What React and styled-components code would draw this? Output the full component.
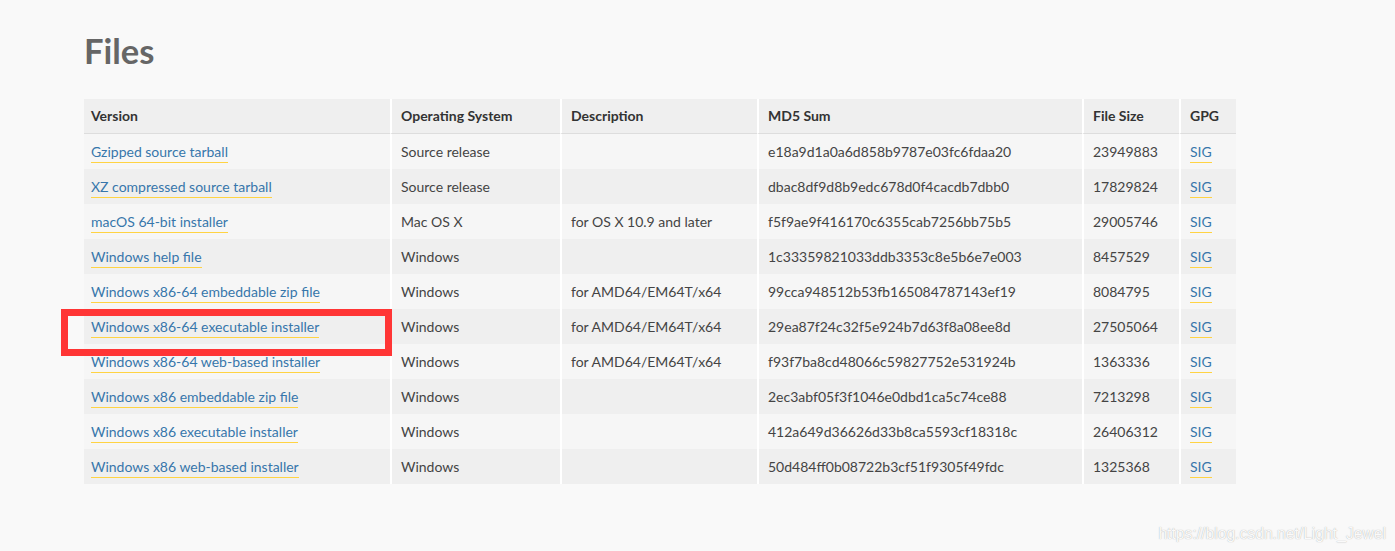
import React from "react";
import styled, { createGlobalStyle } from "styled-components";

const Global = createGlobalStyle`
  html, body { margin: 0; padding: 0; background: #f9f9f9; }
  body { font-family: Lato, "Noto Sans", sans-serif; color: #444; }
`;

const Page = styled.div`
  position: relative;
  width: 1395px;
  height: 551px;
  box-sizing: border-box;
  padding: 28px 0 0 84px;
  background: #f9f9f9;
  overflow: hidden;
`;

const Title = styled.h1`
  margin: 0 0 26px 0;
  font-family: Lato, sans-serif;
  font-size: 34.5px;
  line-height: 45px;
  font-weight: 700;
  color: #666;
`;

const Table = styled.table`
  border-collapse: separate;
  border-spacing: 0;
  table-layout: fixed;
  width: 1152px;
  font-family: Lato, sans-serif;
  font-size: 14px;
`;

const Th = styled.th`
  width: ${(p) => p.$w}px;
  height: 35px;
  box-sizing: border-box;
  padding: 0 6px 1px ${(p) => (p.$first ? 7 : 9)}px;
  text-align: left;
  font-weight: 700;
  color: #333;
  background: #efefef;
  border-left: ${(p) => (p.$first ? "0" : "2px solid #fff")};
  border-bottom: 1px solid #dddddd;
`;

const Row = styled.tr`
  background: ${(p) => (p.$odd ? "#f6f6f6" : "#efefef")};
`;

const Td = styled.td`
  height: 35px;
  box-sizing: border-box;
  padding: 0 6px 0 ${(p) => (p.$first ? 7 : 9)}px;
  color: #444;
  white-space: nowrap;
  border-left: ${(p) => (p.$first ? "0" : "2px solid #fff")};
`;

const Link = styled.a`
  color: #3776ab;
  text-decoration: none;
  border-bottom: 1px solid #ffd343;
  padding-bottom: 2px;
`;

const Highlight = styled.div`
  position: absolute;
  left: 61px;
  top: 309px;
  width: 331px;
  height: 47px;
  box-sizing: border-box;
  border: 7px solid #ff3535;
  pointer-events: none;
`;

const Watermark = styled.div`
  position: absolute;
  right: 9px;
  bottom: 8px;
  font-family: "Liberation Sans", Arial, sans-serif;
  font-size: 15.7px;
  color: rgba(255, 255, 255, 0.95);
  text-shadow: 0 0 1px rgba(90, 90, 90, 0.55);
`;

const cols = [
  ["Version", 306],
  ["Operating System", 170],
  ["Description", 197],
  ["MD5 Sum", 325],
  ["File Size", 97],
  ["GPG", 57],
];

const rows = [
  ["Gzipped source tarball", "Source release", "", "e18a9d1a0a6d858b9787e03fc6fdaa20", "23949883"],
  ["XZ compressed source tarball", "Source release", "", "dbac8df9d8b9edc678d0f4cacdb7dbb0", "17829824"],
  ["macOS 64-bit installer", "Mac OS X", "for OS X 10.9 and later", "f5f9ae9f416170c6355cab7256bb75b5", "29005746"],
  ["Windows help file", "Windows", "", "1c33359821033ddb3353c8e5b6e7e003", "8457529"],
  ["Windows x86-64 embeddable zip file", "Windows", "for AMD64/EM64T/x64", "99cca948512b53fb165084787143ef19", "8084795"],
  ["Windows x86-64 executable installer", "Windows", "for AMD64/EM64T/x64", "29ea87f24c32f5e924b7d63f8a08ee8d", "27505064"],
  ["Windows x86-64 web-based installer", "Windows", "for AMD64/EM64T/x64", "f93f7ba8cd48066c59827752e531924b", "1363336"],
  ["Windows x86 embeddable zip file", "Windows", "", "2ec3abf05f3f1046e0dbd1ca5c74ce88", "7213298"],
  ["Windows x86 executable installer", "Windows", "", "412a649d36626d33b8ca5593cf18318c", "26406312"],
  ["Windows x86 web-based installer", "Windows", "", "50d484ff0b08722b3cf51f9305f49fdc", "1325368"],
];

export default function App() {
  return (
    <>
      <Global />
      <Page>
        <Title>Files</Title>
        <Table>
          <thead>
            <tr>
              {cols.map(([name, w], i) => (
                <Th key={name} $w={w} $first={i === 0}>
                  {name}
                </Th>
              ))}
            </tr>
          </thead>
          <tbody>
            {rows.map((r, i) => (
              <Row key={r[0]} $odd={i % 2 === 0}>
                <Td $first>
                  <Link href="#">{r[0]}</Link>
                </Td>
                <Td>{r[1]}</Td>
                <Td>{r[2]}</Td>
                <Td>{r[3]}</Td>
                <Td>{r[4]}</Td>
                <Td>
                  <Link href="#">SIG</Link>
                </Td>
              </Row>
            ))}
          </tbody>
        </Table>
        <Highlight />
        <Watermark>https://blog.csdn.net/Light_Jewel</Watermark>
      </Page>
    </>
  );
}
